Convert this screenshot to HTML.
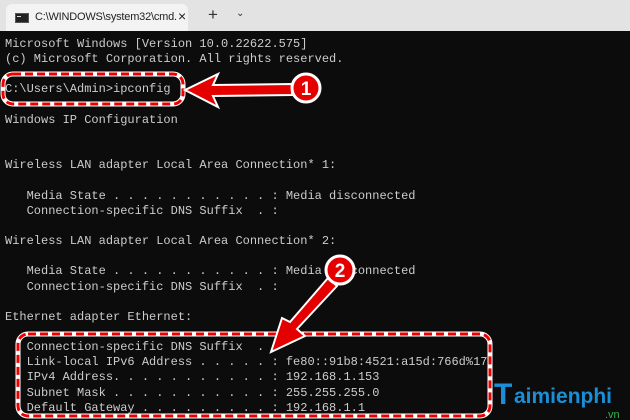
<!DOCTYPE html>
<html><head><style>
body{margin:0;width:630px;height:420px;overflow:hidden;background:#0c0c0c;position:relative;font-family:"Liberation Sans",sans-serif}
.bar{position:absolute;left:0;top:0;width:630px;height:31px;background:#e3e3e3}
.tab{position:absolute;left:6px;top:4px;width:182px;height:27px;background:#f3f3f3;border-radius:6px 6px 0 0}
.tab span{position:absolute;left:29px;top:7px;font-size:11px;color:#222;letter-spacing:-0.2px}
pre{position:absolute;left:5px;top:37px;margin:0;font-family:"Liberation Mono",monospace;font-size:12px;line-height:15.15px;color:#cccccc}
svg{position:absolute;left:0;top:0}
</style></head><body>
<div class="bar"><div class="tab"><svg width="14" height="10" style="left:9px;top:9px"><rect x="0.5" y="0.5" width="13" height="9" fill="#222" stroke="#555"/><rect x="2" y="3" width="4" height="1" fill="#ddd"/></svg><span>C:\WINDOWS\system32\cmd.</span><span style="left:172px;top:4px;font-size:14px">×</span></div>
<span style="position:absolute;left:208px;top:5px;font-size:17px;color:#333">+</span>
<span style="position:absolute;left:236px;top:8px;font-size:10px;color:#333">⌄</span></div>
<pre>Microsoft Windows [Version 10.0.22622.575]
(c) Microsoft Corporation. All rights reserved.

C:\Users\Admin>ipconfig

Windows IP Configuration


Wireless LAN adapter Local Area Connection* 1:

   Media State . . . . . . . . . . . : Media disconnected
   Connection-specific DNS Suffix  . :

Wireless LAN adapter Local Area Connection* 2:

   Media State . . . . . . . . . . . : Media disconnected
   Connection-specific DNS Suffix  . :

Ethernet adapter Ethernet:

   Connection-specific DNS Suffix  . :
   Link-local IPv6 Address . . . . . : fe80::91b8:4521:a15d:766d%17
   IPv4 Address. . . . . . . . . . . : 192.168.1.153
   Subnet Mask . . . . . . . . . . . : 255.255.255.0
   Default Gateway . . . . . . . . . : 192.168.1.1</pre>
<svg width="630" height="420">
<rect x="3" y="74" width="180" height="30" rx="10" fill="none" stroke="#fff" stroke-width="5"/>
<rect x="3" y="74" width="180" height="30" rx="10" fill="none" stroke="#e00" stroke-width="3" stroke-dasharray="8 4"/>
<rect x="18" y="334" width="472" height="82" rx="10" fill="none" stroke="#fff" stroke-width="5"/>
<rect x="18" y="334" width="472" height="82" rx="10" fill="none" stroke="#e00" stroke-width="3" stroke-dasharray="8 4"/>
<polygon points="185,90 218,74 213,85 292,84 292,95 213,96 218,107" fill="#e50000" stroke="#fff" stroke-width="2"/>
<circle cx="306" cy="88" r="14" fill="#e50000" stroke="#fff" stroke-width="3"/>
<text x="306" y="95" text-anchor="middle" font-family="Liberation Sans" font-weight="bold" font-size="19" fill="#fff">1</text>
<polygon points="328,278 337,286 297,329 305,336 271,352 282,318 290,322" fill="#e50000" stroke="#fff" stroke-width="2"/>
<circle cx="340" cy="270" r="14" fill="#e50000" stroke="#fff" stroke-width="3"/>
<text x="340" y="277" text-anchor="middle" font-family="Liberation Sans" font-weight="bold" font-size="19" fill="#fff">2</text>
<text x="494" y="404" font-family="Liberation Sans" font-weight="bold" font-size="30" fill="#1a8fd8">T</text>
<text x="514" y="403" font-family="Liberation Sans" font-weight="bold" font-size="21" fill="#1a8fd8">aimienphi</text>
<text x="605" y="418" font-family="Liberation Sans" font-size="11" fill="#2bb34a">.vn</text>
</svg>
</body></html>
